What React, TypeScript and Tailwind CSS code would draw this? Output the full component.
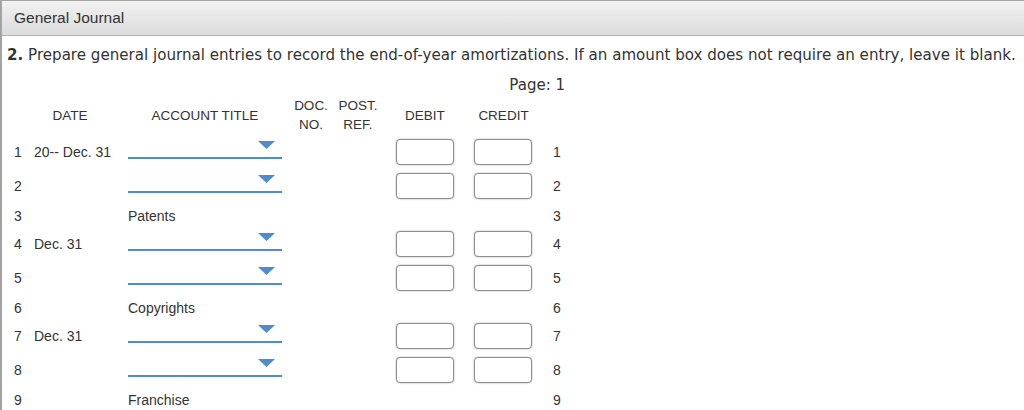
import React from 'react'

type Row = {
  n: number
  date?: string
  kind: 'select' | 'text'
  title?: string
  h: string
}

const ROWS: Row[] = [
  { n: 1, date: '20-- Dec. 31', kind: 'select', h: 'h-[32px]' },
  { n: 2, kind: 'select', h: 'h-[36px]' },
  { n: 3, kind: 'text', title: 'Patents', h: 'h-[24px]' },
  { n: 4, date: 'Dec. 31', kind: 'select', h: 'h-[32px]' },
  { n: 5, kind: 'select', h: 'h-[36px]' },
  { n: 6, kind: 'text', title: 'Copyrights', h: 'h-[24px]' },
  { n: 7, date: 'Dec. 31', kind: 'select', h: 'h-[32px]' },
  { n: 8, kind: 'select', h: 'h-[36px]' },
  { n: 9, kind: 'text', title: 'Franchise', h: 'h-[24px]' },
]

function AccountSelect() {
  return (
    <div className="relative h-[14px] w-[154px] border-b-2 border-[#4d8dcb]">
      {/* dropdown caret */}
      <svg className="absolute right-[7px] top-[-4px]" width="17" height="8" viewBox="0 0 17 8">
        <polygon points="0,0 17,0 8.5,8" fill="#4d8dcb" />
      </svg>
    </div>
  )
}

function AmountBox() {
  return (
    <div className="h-[26px] w-[58px] rounded-[4px] border border-[#8f8f8f] bg-white shadow-[0_0_2px_rgba(0,0,0,0.35)]" />
  )
}

export default function App() {
  return (
    <div className="h-[410px] w-[1024px] overflow-hidden border-l-2 border-t border-[#a3a3a3] bg-white text-[#333]">
      {/* title bar */}
      <div className="flex h-[35px] items-center border-b border-[#b3b3b3] bg-gradient-to-b from-[#f2f2f2] to-[#dcdcdc] px-[12px] font-['Liberation_Sans',Arial,sans-serif] text-[15.5px]">
        General Journal
      </div>

      <div className="pt-[10px] pl-[5px] font-['DejaVu_Sans',Verdana,sans-serif] text-[15.1px] leading-[18px] whitespace-nowrap">
        <span className="font-bold">2.</span> Prepare general journal entries to record the end-of-year amortizations. If an amount box does not require an entry, leave it blank.
      </div>

      <div className="font-['Liberation_Sans',Tahoma,Arial,sans-serif] text-[14px]">
        <div className="mt-[12px] flex w-[563px] justify-end font-['DejaVu_Sans',Verdana,sans-serif] text-[15px] leading-[18px]">
          Page: 1
        </div>

        {/* column headers */}
        <div className="mt-[2px] flex h-[38px] items-center pl-[10px] text-[13.5px] leading-[19px]">
          <div className="w-[116px] text-center">DATE</div>
          <div className="w-[154px] text-center">ACCOUNT TITLE</div>
          <div className="ml-[6px] w-[46px] text-center">DOC.<br />NO.</div>
          <div className="w-[48px] text-center">POST.<br />REF.</div>
          <div className="ml-[14px] w-[58px] text-center">DEBIT</div>
          <div className="ml-[20px] w-[59px] text-center">CREDIT</div>
        </div>

        {/* journal rows */}
        <div className="mt-[2px]">
          {ROWS.map((r) => (
            <div key={r.n} className={`flex items-center pl-[12px] ${r.h}`}>
              <div className="w-[20px]">{r.n}</div>
              <div className="w-[94px]">{r.date ?? ''}</div>
              <div className="w-[154px]">
                {r.kind === 'select' ? <AccountSelect /> : <span>{r.title}</span>}
              </div>
              <div className="w-[114px]" />
              <div className="w-[58px]">{r.kind === 'select' && <AmountBox />}</div>
              <div className="ml-[20px] w-[59px]">{r.kind === 'select' && <AmountBox />}</div>
              <div className="ml-[20px]">{r.n}</div>
            </div>
          ))}
        </div>
      </div>
    </div>
  )
}
